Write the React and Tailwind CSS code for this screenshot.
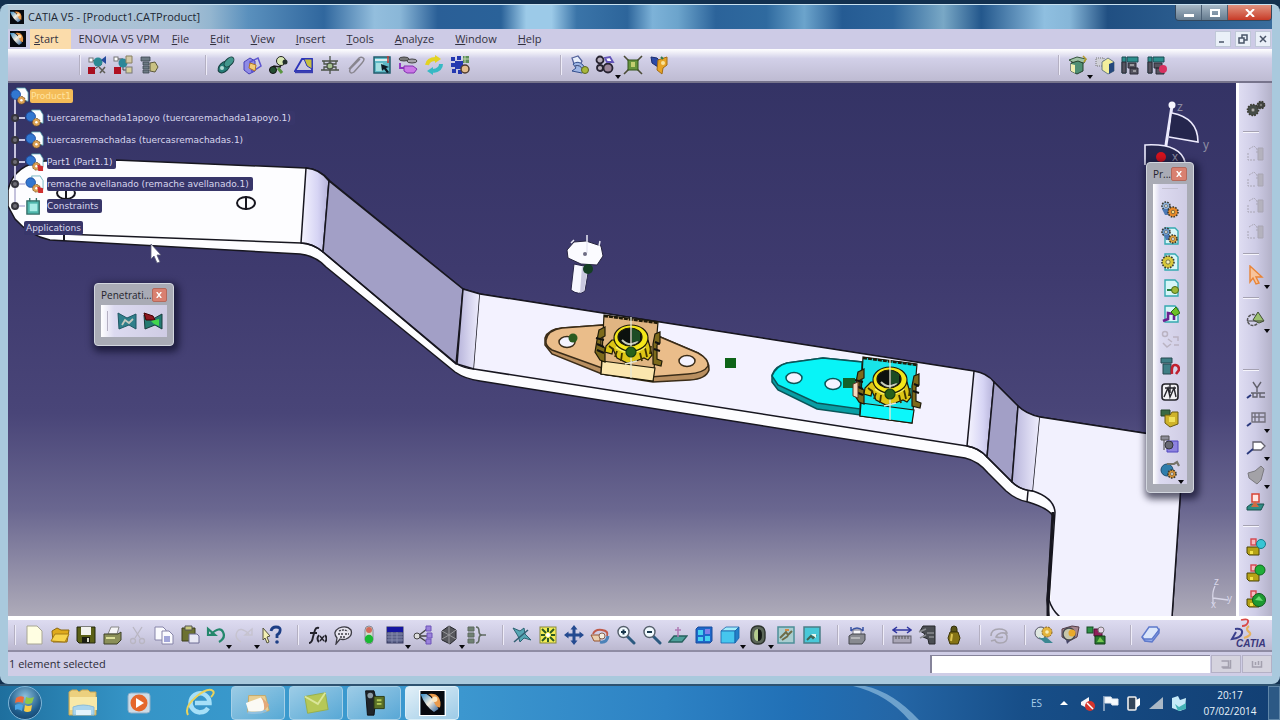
import React from "react";

const gear = (cx, cy, r, fill, hole = "#fff") => (
  <g>
    <circle cx={cx} cy={cy} r={r} fill={fill} stroke="#3b3b30" strokeWidth="1.6" strokeDasharray="1.6 1.2" />
    <circle cx={cx} cy={cy} r={r * 0.35} fill={hole} stroke="#3b3b30" strokeWidth="0.6" />
  </g>
);
const sheet = (
  <path d="M5 2h10l3 3v13H5z" fill="#d8f6f8" stroke="#35a9b0" strokeWidth="1.4" />
);
const disabledSheet = (
  <g stroke="#a9a6b4" fill="none" strokeDasharray="2 1">
    <path d="M3 6l5-3 3 3v4M2 10v7h8" />
    <path d="M12 5h5v12h-5z" fill="#b4b2be" strokeDasharray="none" />
  </g>
);
const magnifier = (
  <g>
    <path d="M11 11l7 7" stroke="#2c5a80" strokeWidth="3" strokeLinecap="round" />
    <circle cx="7.500" cy="7" r="5.500" fill="#f2fbff" stroke="#56606c" strokeWidth="1.400" />
  </g>
);
const stackBase = (
  <g>
    <path d="M1 10h12v8H3l-2-2z" fill="#b6a316" stroke="#4a4408" />
    <path d="M4 14h3v3H4z" fill="#f3e34a" />
    <rect x="5" y="2" width="5" height="6" fill="#f6b9c0" stroke="#d4464e" strokeWidth="1.400" />
  </g>
);

const art = {
  tplRed: (<g><path d="M5 5l10 4-9 6" stroke="#444" fill="none" /><rect x="2" y="3" width="4" height="4" fill="#fff" stroke="#777" /><circle cx="11" cy="7" r="4.500" fill="#2a8a94" /><path d="M14 5l5-4v8z" fill="#244a9c" /><rect x="1" y="12" width="7" height="7" fill="#a80f20" /><path d="M12 12l6 6M18 12l-5 6" stroke="#5d5c55" strokeWidth="1.500" /></g>),
  tplRed2: (<g><path d="M3 4h7v11h7" stroke="#444" fill="none" /><rect x="1" y="2" width="4" height="4" fill="#fff" stroke="#777" /><circle cx="10" cy="8" r="4.500" fill="#2b8798" /><path d="M13 1h6v7h-6z" fill="#d2c8a6" stroke="#888060" /><rect x="1" y="12" width="7" height="7" fill="#b01022" /><rect x="13" y="12" width="6" height="6" fill="#d5cf9c" stroke="#777" /></g>),
  tree: (<g><path d="M2 2h9v4H2zM4 7h6v3H4zM4 11h6v3H4zM4 15h6v3H4z" fill="#6d7a84" stroke="#3c4650" strokeWidth=".8" /><path d="M11 8l5-1 3 5-3 5-5-1z" fill="#c9c184" stroke="#5d5a3c" /></g>),
  coincide: (<g><ellipse cx="8" cy="12" rx="7" ry="4.500" transform="rotate(-45 8 12)" fill="#267d78" stroke="#173f3f" /><ellipse cx="13" cy="7" rx="6" ry="3.500" transform="rotate(-45 13 7)" fill="#42968c" stroke="#173f3f" /><circle cx="6" cy="13" r="2" fill="#b4dcd6" /></g>),
  contact: (<g><path d="M2 7l6-4 5 3v10l-6 3-5-4z" fill="#8f8be6" stroke="#4640b8" /><path d="M8 7l8-4 3 8-9 6z" fill="none" stroke="#5d55cf" strokeWidth="1.500" /><path d="M8 8l6 2-1 6-6-3z" fill="#f4cd76" stroke="#b27422" /></g>),
  offset: (<g><path d="M2 15l4-4 6 1 2-6" stroke="#222" strokeWidth="1.600" fill="none" /><circle cx="5" cy="15" r="3.500" fill="#244d31" stroke="#111" /><circle cx="13" cy="6" r="4.500" fill="#d7e6b2" stroke="#222" /><circle cx="17" cy="7" r="2.500" fill="#22302b" /><path d="M10 13l4 5" stroke="#5a9440" strokeWidth="3" /></g>),
  angle: (<g><path d="M1 16L8 4h10v12z" fill="none" stroke="#2c34b8" strokeWidth="1.800" /><path d="M10 4h8v10l-5-3z" fill="#c7c03e" stroke="#2c34b8" /><path d="M1 17h18" stroke="#3a3fb0" strokeWidth="2.400" /></g>),
  fix: (<g stroke="#4b5347" fill="none" strokeWidth="1.300"><path d="M10 1v18M2 6h16M4 6v3h12V6M1 15h18M4 12h12v3H4z" /><circle cx="10" cy="11" r="3" fill="#a6c292" /></g>),
  clip: (<path d="M3 14L13 3q3-2 5 1 0 2-2 4L8 17q-3 2-4 0-1-2 1-4l9-9" fill="none" stroke="#88858e" strokeWidth="1.500" />),
  quick: (<g><rect x="2" y="2" width="16" height="16" fill="#5fb9c6" stroke="#225d6e" strokeWidth="1.500" /><path d="M3 5h14" stroke="#d8eef0" strokeWidth="2" /><rect x="4" y="8" width="7" height="8" fill="#a6dfe2" /><path d="M9 9l8 3-3 1 3 4-2 1-3-4-2 2z" fill="#0c1a24" /><path d="M16 1v7" stroke="#c33a34" strokeWidth="1.500" /></g>),
  flexible: (<g><ellipse cx="6" cy="4" rx="5" ry="2" fill="#777" stroke="#444" /><ellipse cx="14" cy="6" rx="5" ry="2" fill="#a5a3aa" stroke="#444" /><path d="M2 8v5h4" stroke="#8c2fc0" fill="none" strokeWidth="1.800" /><path d="M6 11h9l4 3-3 4H9l-3-2z" fill="#ca77e6" stroke="#8330b0" /></g>),
  cycle: (<g fill="none" strokeWidth="4"><path d="M3 10q1-6 9-6" stroke="#e3d322" /><path d="M17 9q0 6-8 7" stroke="#36b9c4" /><path d="M11 0l6 4-6 4z" fill="#e3d322" stroke="none" /><path d="M9 12l-6 4 6 4z" fill="#36b9c4" stroke="none" /></g>),
  reuse: (<g fill="#2438b0"><path d="M1 2h4v4H1zM7 1h4v4H7zM1 8h4v4H1zM5 6h8v8H5zM2 14h4v4H2zM8 15h4v4H8z" /><path d="M13 1h6v7h-6z" fill="#5d8f5b" /><path d="M15 1v7M13 4h6" stroke="#c6d9b0" /><circle cx="15" cy="14" r="4" fill="#e3bd8e" stroke="#4d3b30" strokeWidth="1.500" /></g>),
  move: (<g><path d="M3 3l6-2 4 5-2 4-6-1z" fill="#e8eefb" stroke="#54639c" strokeWidth="1.300" /><path d="M4 9q5-4 10 1l3 5-4 3-10-2 4-3z" fill="#9db5e4" stroke="#34508e" /><path d="M6 11q5-2 8 4" stroke="#34406a" fill="none" /><circle cx="16" cy="15" r="3.500" fill="#a9b83a" stroke="#5c6620" /></g>),
  snap: (<g fill="#b7aebb" stroke="#272330" strokeWidth="1.800"><circle cx="5" cy="5" r="3.500" /><circle cx="5" cy="13" r="3" /><circle cx="13" cy="13" r="4.500" fill="#9a8699" /><path d="M10 3l5-1 3 5h-6z" fill="#fff" stroke="#6354b8" /></g>),
  explode: (<g><path d="M1 1l5 5M19 1l-5 5M1 19l5-5M19 19l-5-5" stroke="#4b4b36" strokeWidth="1.600" /><rect x="5" y="5" width="10" height="10" fill="#67943c" stroke="#35561c" /><path d="M8 7h4v5H8z" fill="#c3cf70" /></g>),
  manip: (<g><path d="M2 2l6 1 4 4-3 5-6-4z" fill="#2d4aa6" stroke="#1b2b6e" /><path d="M9 5l9-3v8l-4 3-1 6-5-4z" fill="#e7a326" stroke="#a26c14" /><circle cx="14" cy="8" r="2" fill="#f8e39b" /><path d="M12 2l2 2" stroke="#2d7a4a" strokeWidth="2" /></g>),
  section: (<g><path d="M2 5l8-3 9 2-2 4H7z" fill="#9fc2a5" stroke="#35543c" /><path d="M4 8l7-2 5 2v8l-6 3-6-3z" fill="#4f8f74" stroke="#26402c" /><path d="M4 9l4 1v8l-4-2z" fill="#f1efb0" /><path d="M16 1l3 3-2 3" fill="none" stroke="#b59b2a" strokeWidth="1.500" /></g>),
  scene: (<g><path d="M1 3h8v8H1z" fill="#d0d0d8" stroke="#777" strokeDasharray="1 1" /><path d="M7 7l6-4 6 4v9l-6 3-6-4z" fill="#f3ee9c" stroke="#6a7d86" /><path d="M14 9l5-2v9l-5 3z" fill="#25487d" /></g>),
  catalog: (<g><path d="M1 2h4v16H1zM6 2h11v5H6z" fill="#2c8e8d" stroke="#1b4b52" /><path d="M1 7h4v11H1zM7 8h8v5H7zM9 13h8v6H9z" fill="#55545f" stroke="#2d2c38" /><path d="M9 10h4M12 16h3" stroke="#ddd" /></g>),
  catalogRed: (<g><path d="M1 2h4v16H1zM6 2h11v5H6z" fill="#2c8e8d" stroke="#1b4b52" /><path d="M1 7h4v11H1zM7 8h8v5H7zM9 13h8v6H9z" fill="#55545f" stroke="#2d2c38" /><circle cx="16" cy="14" r="4" fill="#d8315f" /></g>),
  gearsDark: (<g>{gear(7, 11, 5.5, "#454c48", "#aaa")}{gear(15, 6, 3.5, "#3f4340", "#aaa")}</g>),
  ghost: disabledSheet,
  cursor: (<path d="M4 1l12 11-6 0 3 6-3 1-3-6-3 4z" fill="#f7c39b" stroke="#e98436" strokeWidth="1.400" />),
  fly: (<g><circle cx="7" cy="11" r="5.500" fill="none" stroke="#555" strokeWidth="1.500" strokeDasharray="3 1" /><path d="M7 11l5-8 6 9-5 2z" fill="#9bc070" stroke="#3f4e33" /><path d="M1 12h16" stroke="#444" /></g>),
  weld: (<g><path d="M7 1l4 6 4-6M11 7v4M5 12h14M7 12v4h4v-4M14 12v4h5" stroke="#62616c" strokeWidth="1.400" fill="none" /><path d="M1 17l4-3" stroke="#29387c" strokeWidth="2" /></g>),
  note: (<g><path d="M6 4v9h13V4zM9 4v9M13 4v9M6 8h13" stroke="#74727e" strokeWidth="1.400" fill="none" /><path d="M1 17l4-3" stroke="#29387c" strokeWidth="2" /></g>),
  flag: (<g><path d="M7 5h8l4 4-4 4H7z" fill="#fff" stroke="#62606c" strokeWidth="1.300" /><path d="M1 17l6-5" stroke="#29387c" strokeWidth="1.800" /></g>),
  view3d: (<path d="M2 8l7-2 6-5 3 3-3 11-4 4-8-6z" fill="#a3a2a7" stroke="#7a797f" />),
  ann: (<g><rect x="6" y="1" width="7" height="8" fill="#ffe7e4" stroke="#d74434" strokeWidth="1.500" /><path d="M1 14l4-3h13l-3 6H1z" fill="#2f8c84" stroke="#1b534f" /><path d="M9 8l4 6H5z" fill="#cf6c44" /></g>),
  cubeCyan: (<g>{stackBase}<circle cx="15" cy="7" r="4.500" fill="#36c5d4" stroke="#187b8a" /></g>),
  cubeGreen: (<g>{stackBase}<circle cx="14" cy="7" r="5" fill="#1fae38" stroke="#0f6a1e" /></g>),
  cubeGreen2: (<g>{stackBase}<circle cx="13" cy="11" r="6.500" fill="#1d9a32" stroke="#0d5a1b" /><path d="M9 11l4-4 4 5z" fill="#6bdc72" /></g>),
  comp: (<g>{gear(6, 6, 4, "#8fb2dc")}<path d="M2 9h8v6H5z" fill="#4b77b4" />{gear(13, 12, 5, "#e98a2a", "#f9dc80")}</g>),
  prod: (<g>{sheet}{gear(6, 6, 4, "#6b99cf")}<path d="M4 9h6v5H6z" fill="#4b77b4" />{gear(13, 13, 4, "#e0a23c", "#fff")}</g>),
  part: (<g>{sheet}{gear(8, 10, 6, "#d8c83a", "#f7f2b8")}</g>),
  existing: (<g>{sheet}<path d="M7 12h8" stroke="#257c3c" strokeWidth="2" /><circle cx="15" cy="12" r="3.500" fill="#9fb837" stroke="#4b6a1b" /></g>),
  existing2: (<g>{sheet}<path d="M3 17l5-2V9l6 1v6" stroke="#6c2090" strokeWidth="2.600" fill="none" /><path d="M11 8l5-5 4 6-5 3z" fill="#6bc026" stroke="#2f6a14" /></g>),
  replace: (<g stroke="#bab3c2" strokeWidth="1.500" fill="none"><circle cx="5" cy="4" r="2.500" /><path d="M8 9l4 3M13 7h5v4M3 13l4 4 4-3M14 15h5" /></g>),
  reorder: (<g><path d="M1 2h11v5H1zM3 8h8v10H3z" fill="#3f7f86" stroke="#26484f" /><path d="M12 18q-1-9 3-9t4 5l-3 4" fill="none" stroke="#c1202f" strokeWidth="2.600" /></g>),
  number: (<g><rect x="2" y="2" width="16" height="16" rx="3" fill="#f2f1f5" stroke="#25242b" strokeWidth="1.600" /><path d="M4 15L8 6l2 9 4-9 2 9M5 6h11M10 2v9" stroke="#25242b" strokeWidth="1.400" fill="none" /></g>),
  load: (<g><path d="M1 2h9v6H1z" fill="#386a44" stroke="#23422b" /><path d="M5 7h5l2-3h6v12l-8 3-5-4z" fill="#cfb32a" stroke="#6a5a11" /><path d="M9 9h6v5H9z" fill="#f0e05a" /></g>),
  multi: (<g><path d="M1 2h8v4H1z" fill="#8c8c98" stroke="#555" /><path d="M7 7h11v11H7z" fill="#8e83e0" stroke="#5146bf" /><circle cx="9" cy="11" r="4" fill="#676873" stroke="#33333c" /><path d="M4 6v10" stroke="#444" /></g>),
  fast: (<g><circle cx="7" cy="10" r="6" fill="#2f7dab" stroke="#1d4d70" />{gear(12, 14, 4, "#d49135")}<path d="M7 4h7l3-2 2 4" stroke="#77746a" strokeWidth="2.200" fill="none" /></g>),
  fileNew: (<path d="M3 1h10l5 5v13H3z" fill="#fffee2" stroke="#a8a694" />),
  folder: (<g><path d="M2 6l5-3 4 2h8l-2 12H3z" fill="#dfaa1b" stroke="#8b6912" /><path d="M1 16L5 9h14l-4 8z" fill="#f7d44c" stroke="#a67d16" /></g>),
  save: (<g><path d="M1 2h18v16H3l-2-2z" fill="#5b6017" stroke="#23270c" /><rect x="5" y="2" width="10" height="8" fill="#f2f3ee" /><rect x="6" y="12" width="8" height="6" fill="#1b1d12" /><rect x="11" y="13" width="2" height="4" fill="#d8d8c8" /></g>),
  print: (<g><path d="M6 9L9 2h8l-2 7z" fill="#f4f4f6" stroke="#888" /><path d="M2 9h14l3-2v8l-4 4H2z" fill="#8a8f58" stroke="#3c4027" /><path d="M4 13h9" stroke="#dce09a" strokeWidth="2" /></g>),
  cut: (<g stroke="#b9b6c2" strokeWidth="1.300" fill="none"><path d="M5 2l7 11M14 2L7 13" /><circle cx="5" cy="16" r="2.500" /><circle cx="14" cy="16" r="2.500" /></g>),
  copy: (<g fill="#fafafe" stroke="#8684a8"><path d="M1 2h8l3 3v10H1z" /><path d="M8 6h7l4 4v9H8z" /><path d="M10 12h6M10 14h6M10 16h6" stroke="#4a52b4" /></g>),
  paste: (<g><path d="M2 3h13v13H2z" fill="#6c7130" stroke="#3a3c1c" /><path d="M5 1h7v4H5z" fill="#c9ca7e" stroke="#555" /><path d="M9 9h8l2 2v7H9z" fill="#e8e8f4" stroke="#6c6c94" /></g>),
  undo: (<path d="M5 9q9-8 12-2t-4 10M2 4v6h7z" fill="none" stroke="#23876c" strokeWidth="2.200" />),
  redo: (<path d="M15 9q-9-8-12-2t4 10M18 4v6h-7z" fill="none" stroke="#c6c3cf" strokeWidth="1.400" />),
  help: (<g><path d="M1 3l7 8-3 1 2 5-2 1-2-5-2 2z" fill="#f2efb4" stroke="#54533c" /><path d="M9 6q1-4 5-4 5 0 4 4 0 2-3 4v3" stroke="#1c3e86" strokeWidth="2.800" fill="none" /><circle cx="15" cy="17" r="1.800" fill="#1c3e86" /></g>),
  fx: (<g fill="none" stroke="#23222b" strokeWidth="1.900"><path d="M2 18q3 0 4-6l2-7q1-3 4-2M3 8h7M12 10q-3 4 0 7M18 10q3 4 0 7" /><path d="M13 11l4 5M17 11l-4 5" strokeWidth="1.400" /></g>),
  comment: (<g fill="none" stroke="#3c3b44" strokeWidth="1.300"><path d="M4 13Q-1 7 6 3q8-3 12 2 2 6-5 9-3 1-6 0l-4 5z" fill="#e7e5ef" /><path d="M6 6q4-2 9 0M5 9h5M12 9h4M7 12h5" strokeDasharray="2 1" /></g>),
  light: (<g><rect x="6" y="1" width="8" height="18" rx="4" fill="#cfdccb" stroke="#889" /><circle cx="10" cy="5" r="3" fill="#d26b5b" /><circle cx="10" cy="14" r="4.200" fill="#19b832" /></g>),
  table: (<g><rect x="2" y="2" width="16" height="16" fill="#5a6088" stroke="#33365c" /><path d="M2 2h16v5H2z" fill="#1515a0" /><path d="M2 9h16M2 12h16M2 15h16M7 7v11M12 7v11" stroke="#8d92b4" strokeWidth=".8" /></g>),
  graph: (<g fill="#9b82dc" stroke="#6d52b8"><path d="M5 11L14 4M5 11h10M5 11l9 6" stroke="#444" strokeWidth="1.500" /><circle cx="4" cy="11" r="3" fill="#ddd" stroke="#444" /><path d="M13 1h5v5h-5zM14 8h5v5h-5zM13 14h5v5h-5z" /></g>),
  mesh: (<g><path d="M10 1l7 4v9l-6 5-8-4V6z" fill="#56575c" stroke="#24252a" /><path d="M10 1v18M3 6l7 4 7-5M3 14l7-4 7 4" stroke="#98989c" fill="none" /></g>),
  brace: (<g fill="none" stroke="#5f6a60" strokeWidth="1.600"><path d="M1 2h6v4H1zM1 8h6v4H1zM1 14h6v4H1z" fill="#6f8072" strokeWidth="1" /><path d="M9 2q3 0 3 4t3 4q-3 0-3 4t-3 4M15 10h4" /></g>),
  flyBlue: (<g><path d="M1 3l7 3 4-3 1 6 6 6-7-2-4 4-2-6z" fill="#55a6b4" stroke="#2b6373" /><path d="M2 17L16 5" stroke="#315f72" strokeWidth="1.600" /></g>),
  fit: (<g><rect x="2" y="2" width="16" height="16" fill="#f4ee56" stroke="#88893e" /><path d="M4 4l4 4M16 4l-4 4M4 16l4-4M16 16l-4-4M10 3v4M10 13v4M3 10h4M13 10h4" stroke="#2b5a24" strokeWidth="2" /><circle cx="10" cy="10" r="2" fill="#fff" /></g>),
  pan: (<path d="M10 0l3.500 4.500H11.500v4h4V6.500L20 10l-4.500 3.500v-2h-4v4h2L10 20l-3.500-4.500h2v-4h-4v2L0 10l4.500-3.500v2h4v-4h-2z" fill="#244a90" />),
  rotate: (<g fill="none"><path d="M3 9q2-5 9-4t5 6" stroke="#c05a48" strokeWidth="2" /><path d="M1 10h9v6H4z" fill="#e9cfae" stroke="#95522f" /><path d="M10 17q7 1 8-6" stroke="#4c82b8" strokeWidth="3" /><circle cx="12" cy="11" r="3" fill="#f4eee0" stroke="#87614d" /></g>),
  zoomIn: (<g>{magnifier}<path d="M5 7h5M7.500 4.500v5" stroke="#18364b" strokeWidth="2" /></g>),
  zoomOut: (<g>{magnifier}<path d="M5 7h5" stroke="#18364b" strokeWidth="2" /></g>),
  normal: (<g><path d="M1 17l5-6h13l-5 6z" fill="#4b9f99" stroke="#28615f" strokeWidth="1.300" /><path d="M10 12V2M7 5h6" stroke="#b07ab4" strokeWidth="1.500" fill="none" /></g>),
  quad: (<g><path d="M2 4l2-2h14v14l-2 2H2z" fill="#1d67ca" stroke="#1b4d9c" /><path d="M4 5h5v5H4zM11 4h5v5h-5zM4 12h5v4H4zM11 11h5v5h-5z" fill="#46d0ef" /><path d="M11 4h5v5h-5z" fill="#8080e8" /></g>),
  cube: (<g stroke="#1763ac" strokeWidth=".8"><path d="M1 6l5-4h13l-4 4z" fill="#a3ecfa" /><path d="M1 6h14v12H1z" fill="#46c6ee" /><path d="M15 6l4-4v11l-4 5z" fill="#237fc8" /></g>),
  shade: (<g><rect x="3" y="1" width="14" height="18" rx="6" fill="#5b6658" stroke="#2d332d" strokeWidth="1.400" /><path d="M10 4q-4 0-4 6t4 6z" fill="#b5cc8e" /><path d="M10 4q4 0 4 6t-4 6z" fill="#121714" /></g>),
  hide: (<g><rect x="2" y="2" width="16" height="16" fill="#a9cdd0" stroke="#4c8f98" strokeWidth="1.500" /><path d="M4 13l6-6 2 3 4-4M6 15l6-4" stroke="#6d6c48" strokeWidth="2" fill="none" /><path d="M9 5h4" stroke="#d38a44" strokeWidth="2" /></g>),
  swap: (<g><rect x="2" y="2" width="16" height="16" fill="#48c8d8" stroke="#4b7d86" strokeWidth="1.500" /><path d="M5 15l4-4 2 2 3-3" stroke="#416454" strokeWidth="2" fill="none" /><path d="M9 9h5v4z" fill="#eaf8ee" /></g>),
  tools: (<g><path d="M4 6q6-6 12 0M4 6V2M16 6V2" stroke="#3853a4" fill="none" strokeWidth="1.500" /><path d="M6 5h8v5H6z" fill="#f6f6fa" stroke="#778" /><path d="M2 11l3-2h13v6l-3 4H2z" fill="#888a90" stroke="#44464c" /><path d="M4 13h9" stroke="#e0e0e0" /></g>),
  measure: (<g><path d="M2 5h16M5 2L1 5l4 3M15 2l4 3-4 3" stroke="#3036a0" strokeWidth="1.500" fill="none" /><rect x="1" y="11" width="18" height="7" fill="#a9a6b6" stroke="#62606e" /><path d="M4 11v3M7 11v3M10 11v3M13 11v3M16 11v3" stroke="#555" /></g>),
  item: (<g><path d="M5 1h12v18h-6l-1-5-5-2 2-3-5-3z" fill="#4a4d52" stroke="#26282c" /><path d="M1 7l7-3M2 13l6-3M9 8h7M11 12h5" stroke="#898b90" strokeWidth="1.600" /></g>),
  weight: (<g><path d="M7 4q0-3 3-3t3 3v3H7z" fill="#595317" stroke="#33300c" /><path d="M6 7h8l2 6-2 6H6l-2-6z" fill="#857315" stroke="#40380a" /><path d="M8 9l-1 7" stroke="#dcc451" strokeWidth="2" /></g>),
  knot: (<path d="M2 11q0-7 8-7 7 0 8 4l-5 0M2 16l4-1q1 3 5 3 8 0 7-7-1-4-6-3-4 1-5 4 4 1 7 0" fill="none" stroke="#a8a5b0" strokeWidth="1.600" />),
  render: (<g><circle cx="7" cy="8" r="6" fill="#dfe7e0" stroke="#556" /><path d="M2 10q4 5 10 2l7 6h-8z" fill="#3b8792" /><circle cx="13" cy="7" r="5" fill="#e4b43c" stroke="#886422" strokeDasharray="2 1" /><circle cx="13" cy="7" r="1.800" fill="#f7efb8" /></g>),
  render2: (<g><path d="M2 4l10-3 7 1-2 10-8 4-7-4z" fill="#a5868e" stroke="#553e4a" /><circle cx="9" cy="9" r="6" fill="#c7c6ab" stroke="#43484f" strokeWidth="1.400" /><circle cx="12" cy="8" r="3.500" fill="#e9a92b" /><path d="M6 15l1 4 3-3" fill="#446" /></g>),
  material: (<g><rect x="1" y="2" width="6" height="6" fill="#2e9046" stroke="#164b25" /><path d="M8 4h8v7H8z" fill="#8f1f5a" stroke="#541135" /><circle cx="15" cy="5" r="3" fill="#e6d4e8" stroke="#777" /><path d="M9 11h10v8H9z" fill="#2a7a30" stroke="#123e17" /><path d="M11 17l3-5 4 5z" fill="#76c850" /></g>),
  eraser: (<g fill="#dbe6fa" stroke="#5e79cb" strokeWidth="1.400"><path d="M2 12L9 2h8l2 3-7 11H5z" /><path d="M2 12l3 4 7 1 7-9V5l-7 9H4z" fill="#96aeec" /></g>),
  penA: (<g><path d="M1 2l9 5 9-4v15l-7-4-10 4z" fill="#2f7f8b" stroke="#205764" /><path d="M5 14l3-5 4 3 4-4" stroke="#c4c8be" strokeWidth="1.800" fill="none" /></g>),
  penB: (<g><path d="M1 4l9 4 9-5v15l-7-4-10 4z" fill="#247a72" stroke="#183c3c" /><path d="M1 2l9 3 2 4H3z" fill="#8f1720" stroke="#400" /><path d="M8 10l8-2v7l-5-2z" fill="#43d64e" /></g>),
};

function Tool({ name, menu, tall }) {
  return (
    <button
      type="button"
      aria-label={name}
      className={
        menu && !tall
          ? "relative flex h-5 w-[22px] shrink-0 items-center"
          : "relative flex h-5 w-5 shrink-0 items-center"
      }
    >
      <svg viewBox="0 0 20 20" className="h-5 w-5" aria-hidden="true">
        {art[name]}
      </svg>
      {menu && (
        <svg viewBox="0 0 6 4" className="absolute -right-1 -bottom-1 h-1 w-1.5" aria-hidden="true">
          <path d="M0 0h6L3 4z" fill="#08080c" />
        </svg>
      )}
    </button>
  );
}

const Grip = ({ className = "" }) => (
  <span className={"h-5 w-px shrink-0 bg-[#b4b0c2] shadow-[1px_0_0_#eeecf8] " + className} />
);

function Group({ items, className = "" }) {
  return (
    <div className={"flex shrink-0 items-center gap-1.5 " + className}>
      {items.map((i) => (
        <Tool key={i} name={i.replace("*", "")} menu={i.endsWith("*")} />
      ))}
    </div>
  );
}

function RailGroup({ items, className = "gap-1.5" }) {
  return (
    <div className={"flex flex-col items-center " + className}>
      {items.map((i, n) => (
        <Tool key={i + n} name={i.replace("*", "")} menu={i.endsWith("*")} tall />
      ))}
    </div>
  );
}

const RailGrip = () => (
  <div className="flex h-6 w-full items-center">
    <span className="ml-1 h-px w-4 bg-[#a5a2b2] shadow-[0_1px_0_#f6f5fc]" />
  </div>
);

const AppIcon = ({ className }) => (
  <svg viewBox="0 0 16 16" className={className} aria-hidden="true">
    <defs>
      <linearGradient id="comet" x1="0" y1="0" x2="1" y2="1">
        <stop offset="0" stopColor="#2f86c4" />
        <stop offset="0.500" stopColor="#f6efe0" />
        <stop offset="1" stopColor="#2a5f9a" />
      </linearGradient>
    </defs>
    <rect width="16" height="16" fill="#07090f" />
    <path d="M0 2q3 8 9 12l3-2Q9 5 4 2z" fill="url(#comet)" />
    <path d="M5 2q5-1 7 2t1 7q-3 0-4-4T5 2z" fill="#e99a4c" />
    <circle cx="9.500" cy="5.500" r="1.800" fill="#fbe6c0" />
  </svg>
);

function TitleBar() {
  return (
    <header className="flex h-6 items-center bg-[linear-gradient(90deg,#b5c9d9_0%,#a6bfd4_14%,#94b6d0_16%,#5a90bd_19%,#30679e_25%,#93bedd_29%,#8ab7d8_31%,#2a5f97_34%,#2a6299_39%,#9ccae8_41%,#9ccae8_43%,#3a74a8_45%,#2d659b_49%,#7db2d8_51%,#6ca4cc_53%,#2b639a_56%,#2f6a9f_60%,#6ca4cc_63%,#255b93_66%,#2d659b_70%,#79a8c6_74%,#23578c_77%,#8fbfe0_82%,#86b6d8_84%,#204f82_87%,#386c9c_100%)] pl-0.5">
      <AppIcon className="h-3.5 w-3.5" />
      <h1 className="pl-1 font-['Open_Sans','Noto_Sans',sans-serif] text-[11px] leading-4 text-[#1c2733]">
        CATIA V5 - [Product1.CATProduct]
      </h1>
      <div className="ml-auto flex h-4 self-start overflow-hidden rounded-b border border-t-0 border-[#33475c] text-white">
        <button type="button" aria-label="Minimize" className="flex h-4 w-[26px] items-center justify-center border-r border-[#4b5f74] bg-linear-to-b from-[#a7b8c6] to-[#62788c]">
          <span className="mt-1 h-[3px] w-2.5 bg-white" />
        </button>
        <button type="button" aria-label="Restore" className="flex h-4 w-[26px] items-center justify-center border-r border-[#4b5f74] bg-linear-to-b from-[#a7b8c6] to-[#62788c]">
          <span className="h-2 w-2.5 border-2 border-white" />
        </button>
        <button type="button" aria-label="Close" className="flex h-4 w-[43px] items-center justify-center bg-linear-to-b from-[#e0917f] to-[#c5301d]">
          <svg viewBox="0 0 10 8" className="h-2 w-2.5"><path d="M1 0l8 8M9 0L1 8" stroke="#fff" strokeWidth="2" /></svg>
        </button>
      </div>
    </header>
  );
}

const menus = ["File", "Edit", "View", "Insert", "Tools", "Analyze", "Window", "Help"];

function MenuBar() {
  return (
    <nav className="flex h-5 items-center bg-[#cdcbe6] font-['Open_Sans','Noto_Sans',sans-serif] text-[11px] leading-4 text-[#33313f]">
      <AppIcon className="ml-0.5 h-4 w-4" />
      <button type="button" className="ml-1 h-full bg-[#fbdcab] pr-3 pl-1"><u>S</u>tart</button>
      <button type="button" className="ml-2">ENOVIA V5 VPM</button>
      <div className="ml-3 flex gap-[21px]">
        {menus.map((m) => (
          <button type="button" key={m}><u>{m[0]}</u>{m.slice(1)}</button>
        ))}
      </div>
      <div className="ml-auto flex gap-1 pr-px">
        {["M2 9h5", "M2 5h5v5H2zM5 5V2h5v5H7", "M3 3l6 6M9 3l-6 6"].map((d, i) => (
          <button type="button" key={d} aria-label={["Minimize document", "Restore document", "Close document"][i]} className="flex h-4 w-4 items-center justify-center border border-[#c0c8d8] bg-[#eaf0f8]">
            <svg viewBox="0 0 12 12" className="h-3 w-3"><path d={d} fill="none" stroke="#4a5568" strokeWidth="1.500" /></svg>
          </button>
        ))}
      </div>
    </nav>
  );
}

function TopTools() {
  return (
    <div className="flex h-[34px] items-center border-b-2 border-[#77748c] bg-linear-to-b from-white via-[#d2d0e8] via-30% to-[#bebbd2]">
      <Grip className="ml-[71px]" />
      <Group className="ml-[7px]" items={["tplRed", "tplRed2", "tree"]} />
      <Grip className="ml-[46px]" />
      <Group className="ml-2.5" items={["coincide", "contact", "offset", "angle", "fix", "clip", "quick", "flexible", "cycle", "reuse"]} />
      <Grip className="ml-[90px]" />
      <Group className="ml-2" items={["move", "snap*", "explode", "manip"]} />
      <Grip className="ml-auto" />
      <Group className="mr-[105px] ml-2" items={["section*", "scene", "catalog", "catalogRed"]} />
    </div>
  );
}

const bottomGroups = [
  ["fileNew", "folder", "save", "print", "cut", "copy", "paste", "undo*", "redo*", "help"],
  ["fx", "comment", "light", "table*", "graph", "mesh*", "brace"],
  ["flyBlue", "fit", "pan", "rotate", "zoomIn", "zoomOut", "normal", "quad", "cube*", "shade*", "hide", "swap"],
  ["tools"],
  ["measure", "item", "weight"],
  ["knot"],
  ["render", "render2", "material"],
];

const ToolStrip = ({ items }) => (
  <div className="flex items-center gap-[9px]">
    <Grip />
    <Group items={items} />
  </div>
);

function BottomTools() {
  return (
    <div className="flex h-9 items-center border-t-4 border-b-2 border-t-white border-b-[#8f8ca4] bg-linear-to-b from-[#dddbf0] via-[#cecce4] to-[#bcb9d0]">
      <div className="flex items-center gap-[15px] pl-1.5">
        {bottomGroups.map((g) => (
          <ToolStrip key={g[0]} items={g} />
        ))}
      </div>
      <div className="pl-6">
        <ToolStrip items={["eraser"]} />
      </div>
      <svg viewBox="0 0 40 30" className="-mt-1 mr-0.5 ml-auto h-[30px] w-10" role="img" aria-label="CATIA">
        <path d="M11 2q8-2 7 2t-6 4" fill="none" stroke="#d94a48" strokeWidth="1.800" />
        <path d="M5 11q8-1 7 4t-10 6l4-7" fill="none" stroke="#3a3f8c" strokeWidth="2" />
        <path d="M19 8q-4 3 0 6t-5 6" fill="none" stroke="#e6b260" strokeWidth="2.200" />
        <text x="6" y="29" fontFamily="Liberation Sans, sans-serif" fontSize="10" fontStyle="italic" fontWeight="700" fill="#39377c">CATIA</text>
      </svg>
    </div>
  );
}

function StatusBar() {
  return (
    <footer className="flex h-6 items-center bg-[#cfcde6] font-['Open_Sans','Noto_Sans',sans-serif] text-[11px] text-[#2c2b36]">
      <p className="pl-px leading-4">1 element selected</p>
      <input aria-label="Power input" className="ml-auto h-[18px] w-[280px] border-t border-l-2 border-[#85839a] bg-white px-1 outline-none" />
      {["M3 3h7v6H3M12 2v8H4", "M3 3v6h9V3M6 4v3M9 3v4"].map((d, i) => (
        <button type="button" key={d} aria-label={["Command list", "Dialog"][i]} className="ml-px flex h-[18px] w-[30px] items-center justify-center border border-[#b4b1c6] bg-[#d5d3de]">
          <svg viewBox="0 0 15 12" className="h-3 w-4"><path d={d} fill="none" stroke="#a3a0ae" strokeWidth="1.500" /></svg>
        </button>
      ))}
    </footer>
  );
}

const ProductIcon = ({ red }) => (
  <svg viewBox="0 0 20 20" className="relative h-[19px] w-[19px] shrink-0" aria-hidden="true">
    <path d="M7 1h9l3 5v9L9 12z" fill="#fbfdff" stroke="#55a7b4" strokeWidth=".8" />
    <circle cx="6" cy="8" r="5" fill="#3277d0" stroke="#1b4da0" />
    <circle cx="12" cy="14" r="4" fill="#dba254" stroke="#765226" strokeDasharray="2 1" />
    <circle cx="12" cy="14" r="1.300" fill="#fff" />
    {red && <path d="M13 12l6 2v5h-5z" fill="#cf3030" />}
  </svg>
);

const nodes = [
  ["tuercaremachada1apoyo (tuercaremachada1apoyo.1)", "p"],
  ["tuercasremachadas (tuercasremachadas.1)", "p"],
  ["Part1 (Part1.1)", "r"],
  ["remache avellanado (remache avellanado.1)", "r"],
  ["Constraints", "c"],
];

function SpecTree() {
  return (
    <ul className="relative flex w-fit flex-col pt-0.5 font-['DejaVu_Sans',sans-serif] text-[9px] leading-[14px] text-[#d9d7ee]">
      <span className="absolute top-4 bottom-8 left-1.5 w-0.5 bg-[#c4c2dc]" aria-hidden="true" />
      <li className="flex h-[22px] items-center gap-px pl-0.5">
        <ProductIcon />
        <span className="rounded-[2px] bg-[#f4bc58] px-px pr-0.5 text-[#ffe3a0]">Product1</span>
      </li>
      {nodes.map(([label, kind]) => (
        <li key={label} className="relative flex h-[22px] items-center">
          <span className="ml-[3px] h-2 w-2 rounded-full border-2 border-[#35343c] bg-[#6c6b73]" />
          <span className="h-0.5 w-1.5 bg-[#c8c6e2]" />
          {kind === "c" ? (
            <svg viewBox="0 0 20 20" className="h-[19px] w-[19px]" aria-hidden="true">
              <path d="M2 4h13v14H2zM5 1v4M12 1v4" fill="#4fb6ac" stroke="#356e68" strokeWidth="1.400" />
              <path d="M5 7h8v8H5z" fill="#a9ece6" />
            </svg>
          ) : (
            <ProductIcon red={kind === "r"} />
          )}
          <span className="ml-[3px] rounded-[2px] bg-[#38366a] pr-1 whitespace-nowrap">{label}</span>
        </li>
      ))}
      <li className="flex h-[22px] items-center pl-4">
        <span className="rounded-[2px] bg-[#38366a] px-0.5">Applications</span>
      </li>
    </ul>
  );
}

function Clamp({ x, y, plate, lip }) {
  return (
    <g transform={`translate(${x} ${y})`} stroke="#1e1a08" strokeWidth="1.200">
      <path d="M-27-23L27-16 22 43-30 36z" fill={plate} />
      <path d="M-27-22L27-15" strokeWidth="2.400" strokeDasharray="4 1" />
      <path d="M-29 23L24 30 22 43-30 36z" fill={lip} />
      <path d="M-32-8l6-3v9l-4 2v8l4 2v14l-5-2-5-8 2-12z" fill="#7d6a1c" />
      <path d="M24-4l5-2v11l-3 2v14l5 2-1 5-8-2V6z" fill="#7d6a1c" />
      <path d="M-35 0l8 2M-34 6l7 3M-34 12l7 3M24 4l5 2M23 11l6 2" stroke="#111" strokeWidth="2" />
      <path d="M-19 2l-6 6-1 6 7 2 1-5 4 9 10 5 9-2 8-3 4 2 4-5-2-8-2-7z" fill="#ddc516" />
      <path d="M-22 8l5 4M-14 13l-2 6M-9 15l-1 8M9 15l2 8M14 10l2 9M20 8l-1 8" stroke="#3d3300" strokeWidth="1.800" />
      <path d="M-15 9q14 10 29 0" fill="none" stroke="#f7ef5c" strokeWidth="2.400" />
      <ellipse rx="17" ry="13" fill="#f4e61a" />
      <ellipse cx="-1" cy="-1" rx="12" ry="9" fill="#0c110e" />
      <path d="M-9 2q8 8 16 1" fill="none" stroke="#c6cbbb" strokeWidth="2" />
      <path d="M1-10l8 4v9l-8 1z" fill="#1c4b24" stroke="none" />
      <path d="M0-21v34M0 18v22M-6 26l12-3" stroke="#e6e8d4" strokeWidth="1.300" />
      <circle cx="0" cy="14" r="5" fill="#27601a" stroke="#143c10" />
    </g>
  );
}

function Model() {
  return (
    <svg viewBox="8 83 1228 533" preserveAspectRatio="xMidYMid slice" className="absolute inset-0 h-full w-full" role="img" aria-label="Assembly model">
      <defs>
        <linearGradient id="bend" x1="0" x2="1">
          <stop offset="0" stopColor="#f6f5ff" />
          <stop offset="0.600" stopColor="#d6d4f4" />
          <stop offset="1" stopColor="#b4b1d8" />
        </linearGradient>
        <linearGradient id="bendBack" x1="0" x2="1">
          <stop offset="0" stopColor="#b6b3da" />
          <stop offset="1" stopColor="#f0effe" />
        </linearGradient>
      </defs>
      <g stroke="#17161f" strokeWidth="1.500" strokeLinejoin="round">
        <path d="M115 160L306 168Q320 169 330 181L463 289 480 294 972 371Q985 373 994 382L1018 406Q1026 414 1040 417L1150 434 1184 440 1172 617H1049L1047 600 1053 516Q1048 508 1028 502 1016 500 1006 491L988 473Q978 461 965 458L480 381Q465 379 455 372L326 267Q316 256 300 254L50 240Q30 236 15 219L8 206V190Q14 164 45 161z" fill="#fdfdff" />
        <path d="M306 168Q320 169 329 181L323 252Q312 243 301 243z" fill="url(#bend)" />
        <path d="M329 181L463 289 456 364 323 252z" fill="#a29fc6" />
        <path d="M463 289L480 294 474 369 457 364z" fill="url(#bendBack)" />
        <path d="M480 294L974 371 967 446 474 369z" fill="#f3f2ff" stroke="none" />
        <path d="M974 371Q987 373 994 382L987 457Q979 448 967 446z" fill="url(#bend)" />
        <path d="M994 382L1018 406 1012 482 987 457z" fill="#a29fc6" />
        <path d="M1018 406Q1026 414 1040 417L1033 491Q1020 490 1012 482z" fill="url(#bendBack)" />
        <path d="M1040 417L1150 434 1184 440 1172 617H1050L1054 512Q1048 494 1033 491z" fill="#f2f1fe" stroke="none" />
        <path d="M62 234L301 243Q314 244 323 252L457 364Q463 368 474 369L967 446Q979 448 987 457L1012 482Q1020 490 1033 491 1054 498 1055 512L1049 600Q1052 610 1060 617M480 294L974 371M1040 417L1150 434M1184 440L1172 617M1028 491L1027 502" fill="none" />
        <path d="M1053 512L1048 600V617" strokeWidth="3" fill="none" />
        <g fill="none" strokeWidth="2">
          <ellipse cx="246" cy="203" rx="9" ry="6" />
          <path d="M246 196v14" />
          <ellipse cx="66" cy="193" rx="9" ry="6" />
          <path d="M66 186v14M64 234v7" />
        </g>
      </g>

      <g stroke="#3a2c18" strokeWidth="1.500">
        <path d="M545 345V338Q548 329 562 328L603 325 658 336 698 353Q710 360 709 370 706 379 690 380L653 382 602 374 552 354z" fill="#b98f60" />
        <path d="M546 340Q548 330 562 328L603 325 658 336 698 353Q709 359 708 366 704 373 688 374L650 377 602 368 552 350Q545 346 546 340z" fill="#eabd8a" />
        <ellipse cx="567" cy="342" rx="8" ry="5.500" fill="#f4f3ff" />
        <ellipse cx="687" cy="361" rx="8" ry="5.500" fill="#f4f3ff" />
      </g>
      <Clamp x={631} y={338} plate="#e0b582" lip="#fbe6ae" />
      <circle cx="573" cy="338" r="4.500" fill="#2b5b20" />
      <g stroke="#0a5558" strokeWidth="1.500">
        <path d="M772 382V375Q775 366 787 363L823 358 862 362 860 415 817 409 778 390z" fill="#089ea4" />
        <path d="M772 376Q776 366 787 363L823 358 862 362 860 409 817 403 778 385z" fill="#08f4f7" />
        <ellipse cx="794" cy="378" rx="8" ry="5.500" fill="#f4f3ff" />
        <ellipse cx="833" cy="384" rx="8" ry="5.500" fill="#f4f3ff" />
      </g>
      <Clamp x={890} y={380} plate="#18e4e8" lip="#0cf7fa" />
      <rect x="843" y="378" width="12" height="10" fill="#12632a" />
      <path d="M853 384l5-2v16l-5-2z" fill="#f5d9bd" stroke="#553322" />
      <rect x="725" y="358" width="11" height="10" fill="#0d6418" />

      <path d="M574 264L589 267 585 291Q579 296 571 290z" fill="#f7f7ff" stroke="#29274a" />
      <path d="M582 266L588 268 584 291 580 293z" fill="#c9c8df" />
      <path d="M567 250l7-8 12-1 15 5 2 10-6 9-16-1-13-6z" fill="#fbfbff" stroke="#26243e" strokeLinejoin="round" />
      <path d="M587 235V253M571 243l3-3M600 241l-1 5" stroke="#e8e8f4" strokeWidth="1.500" />
      <circle cx="585" cy="254" r="2" fill="#6d6c84" />
      <circle cx="588" cy="269" r="5" fill="#153f24" />

      <g fill="none" stroke="#eceafd" strokeWidth="1.600">
        <path d="M1172 106L1164 158" strokeWidth="3" />
        <path d="M1172 113Q1198 118 1198 142L1169 137M1145 165V145Q1180 143 1185 162" fill="#25264d" />
      </g>
      <circle cx="1172" cy="105" r="3.500" fill="#f7f6ff" />
      <circle cx="1161" cy="157" r="5" fill="#d5131d" />
      <g fontFamily="Liberation Sans, sans-serif" fontSize="12" fill="#8c8ba0">
        <text x="1177" y="111">z</text>
        <text x="1203" y="149">y</text>
        <text x="1172" y="161">x</text>
      </g>
      <g stroke="#d8d6e8" strokeWidth="1.300" fill="#d8d6e8">
        <path d="M1213 604V600Q1212 592 1215 586M1213 598L1228 600" fill="none" />
        <g stroke="none" fontFamily="Liberation Sans, sans-serif" fontSize="10">
          <text x="1214" y="585">z</text>
          <text x="1227" y="602">y</text>
          <text x="1211" y="608">x</text>
        </g>
      </g>
      <path d="M151 244v15l3-3 3 7 3-1-3-7h4z" fill="#fff" stroke="#5b5a78" strokeWidth=".8" />
    </svg>
  );
}

function Palette({ title, className, bodyClass, children }) {
  return (
    <section aria-label={title} className={"absolute flex flex-col rounded-sm border border-[#d2d6de] bg-[#a9abb5] px-1.5 pb-2 shadow-[2px_3px_7px_3px_rgba(10,10,35,0.65)] " + className}>
      <div className="flex h-[21px] items-center justify-between font-['Open_Sans','Noto_Sans',sans-serif] text-[10px] leading-4 text-[#24242c]">
        <span>{title}</span>
        <button type="button" aria-label={"Close " + title} className="flex h-3.5 w-4 items-center justify-center rounded-[2px] border border-[#b4695c] bg-[#d98070]">
          <svg viewBox="0 0 8 8" className="h-1.5 w-2"><path d="M1 0l6 8M7 0L1 8" stroke="#fff" strokeWidth="1.800" /></svg>
        </button>
      </div>
      <div className={"flex items-center bg-linear-to-r from-white via-[#dcdaf0] via-20% to-[#cfcce4] " + bodyClass}>{children}</div>
    </section>
  );
}

function Rail() {
  return (
    <aside className="flex w-9 shrink-0 flex-col items-center border-l-[3px] border-white bg-linear-to-r from-[#dfddf2] via-[#cecce6] to-[#b3b1c8] pt-4">
      <RailGroup items={["gearsDark"]} />
      <RailGrip />
      <RailGroup items={["ghost", "ghost", "ghost", "ghost"]} />
      <RailGrip />
      <RailGroup items={["cursor*"]} />
      <RailGrip />
      <RailGroup className="h-12" items={["fly*"]} />
      <RailGrip />
      <RailGroup className="gap-2" items={["weld", "note*", "flag*", "view3d*", "ann"]} />
      <RailGrip />
      <RailGroup items={["cubeCyan", "cubeGreen", "cubeGreen2"]} />
    </aside>
  );
}

const taskIcons = [
  <g key="a"><path d="M5 7h18l4 16-6 2H4z" fill="#e8cf94" stroke="#c4a868" /><path d="M2 15l16-6 6 8-4 7H5z" fill="#fbfaf4" /><path d="M18 8l9 9-6 7q2-8-3-16z" fill="#e4a878" /><path d="M4 25q12 2 20-2" stroke="#8fc0e0" strokeWidth="2.500" fill="none" /></g>,
  <g key="b"><path d="M3 8l22-4 3 18-22 4z" fill="#b6c857" stroke="#98ae48" /><path d="M3 8l14 8L25 4" fill="none" stroke="#dbe69a" strokeWidth="2" /></g>,
  <g key="c"><path d="M6 2h9l2 8-2 18H8z" fill="#20252a" stroke="#0c0e10" /><path d="M15 8h11v13H15z" fill="#5b7128" stroke="#2c3a12" /><circle cx="11" cy="7" r="3" fill="#8c9ba3" /><path d="M18 12h5M18 16h5" stroke="#b6cc5a" strokeWidth="2" /></g>,
];

function Taskbar() {
  return (
    <nav aria-label="Taskbar" className="flex h-9 shrink-0 items-center border-t-2 border-[#2d5270] bg-[linear-gradient(90deg,#1e6f9e_0%,#3594c6_10%,#3a9ace_22%,#3c97cf_36%,#2d82c4_52%,#2170b6_62%,#2466a6_70%,#174e88_80%,#123f73_100%)] font-['Open_Sans','Noto_Sans',sans-serif] text-[11px] text-white">
      <button type="button" aria-label="Start" className="ml-2 flex h-[34px] w-[34px] items-center justify-center rounded-full border border-[#7fb4d6] bg-[radial-gradient(circle_at_50%_30%,#8ec0dc,#1f5d8c_60%,#123a60)]">
        <svg viewBox="0 0 20 20" className="h-5 w-5">
          <path d="M1 5q4-3 8-1L8 10Q4 8 0 10z" fill="#ee6a3c" />
          <path d="M11 4q4 2 8 0l-2 6q-4 2-7 0z" fill="#8fc84a" />
          <path d="M0 12q4-2 8 0l-1 6q-4-3-7-1z" fill="#4aa5e6" />
          <path d="M10 12q3 2 7 0l-1 6q-4 2-7 0z" fill="#f8cc47" />
        </svg>
      </button>
      <button type="button" aria-label="Explorer" className="ml-[25px]">
        <svg viewBox="0 0 32 30" className="h-[30px] w-8">
          <path d="M2 4l3-2h5l2 2 3-2h6l2 2h6v23H2z" fill="#ecd07e" stroke="#c8a856" />
          <path d="M3 9h27v13H3z" fill="#f8e9a8" />
          <path d="M6 19q10-4 21 0v8H6z" fill="#a9d5ee" stroke="#8bbcd8" />
          <path d="M9 22h15v5H9z" fill="#e4f3fb" />
        </svg>
      </button>
      <button type="button" aria-label="Media Player" className="ml-7">
        <svg viewBox="0 0 24 24" className="h-6 w-6">
          <rect x="1" y="2" width="22" height="20" rx="3" fill="#cddbe6" stroke="#8eafc8" />
          <circle cx="12" cy="12" r="8.500" fill="#e5672c" />
          <path d="M9 7l8 5-8 5z" fill="#fff" />
        </svg>
      </button>
      <button type="button" aria-label="Internet Explorer" className="ml-[34px]">
        <svg viewBox="0 0 30 30" className="h-[30px] w-[30px]">
          <path d="M23 20a9.500 9.500 0 1 1 1.500-5H10" fill="none" stroke="#a6e0f8" strokeWidth="4.500" />
          <path d="M3 27Q-1 19 11 9T28 3q2 2-2 6" fill="none" stroke="#ead35c" strokeWidth="2" />
        </svg>
      </button>
      <div className="ml-4 flex gap-1">
        {taskIcons.map((ic, i) => (
          <button type="button" key={i} aria-label={["Mail", "Notes", "Recorder"][i]} className="flex h-[34px] w-[54px] items-center justify-center rounded-sm border border-[#a5d0e8] bg-linear-to-br from-white/50 to-white/15">
            <svg viewBox="0 0 30 30" className="h-7 w-7">{ic}</svg>
          </button>
        ))}
        <button type="button" aria-label="CATIA" className="flex h-[34px] w-[54px] items-center justify-center rounded-sm border border-[#d8eef8] bg-linear-to-br from-white/85 to-white/50">
          <AppIcon className="h-[26px] w-[27px] border border-white" />
        </button>
      </div>
      <svg viewBox="0 0 90 34" className="ml-auto h-[34px] w-[90px]" aria-hidden="true">
        <path d="M0 0Q34 8 56 34H66Q40 6 12 0z" fill="#b8def4" opacity=".5" />
      </svg>
      <span className="ml-[88px] text-[10px] leading-4 text-[#a9cdea]">ES</span>
      <div className="ml-[13px] flex items-center gap-[5px]">
        {[
          <path key="1" d="M5 11l4-4 4 4z" fill="#fff" />,
          <g key="2"><path d="M3 8l8-5v12l-8-4z" fill="#f4f4f8" /><circle cx="12" cy="12" r="5" fill="#d3352e" /><path d="M9 9l6 6" stroke="#fff" strokeWidth="1.500" /></g>,
          <path key="3" d="M3 2v15M4 3h6l1 2h6v6h-6l-1-2H4z" fill="#f6fafc" stroke="#e4ebf2" />,
          <g key="4"><rect x="4" y="3" width="8" height="13" rx="1" fill="#34465a" stroke="#eee" strokeWidth="1.600" /><path d="M12 6l4-2v7l-4 3z" fill="#fff" /></g>,
          <path key="5" d="M2 15L16 3v12z" fill="#aab8c6" />,
          <g key="6"><path d="M2 4l6-2 2 4 6-2-1 11-5 2-8-3z" fill="#c6eaf8" /><path d="M5 10l4 3 7-4v6l-8 2z" fill="#44b3b8" /></g>,
        ].map((ic, i) => (
          <svg key={i} viewBox="0 0 18 18" className="h-[18px] w-[18px]" aria-hidden="true">{ic}</svg>
        ))}
      </div>
      <time className="ml-3.5 flex w-14 shrink-0 flex-col items-center text-[10px] leading-4 text-[#eaf3fa]">
        <span>20:17</span>
        <span>07/02/2014</span>
      </time>
      <button type="button" aria-label="Show desktop" className="ml-2.5 h-[34px] w-3 border border-[#5f86a8] bg-[#2c5985]" />
    </nav>
  );
}

export default function App() {
  return (
    <div className="flex h-screen flex-col overflow-hidden bg-[#12304f] pt-1">
      <main className="flex min-h-0 flex-1 flex-col rounded-lg border-t border-[#c8e2f2] bg-[#a9c9dd] px-2 pb-2">
        <TitleBar />
        <MenuBar />
        <TopTools />
        <div className="flex min-h-0 flex-1">
          <div className="relative min-w-0 flex-1 overflow-hidden bg-[linear-gradient(180deg,#343365_0%,#3e3a6e_35%,#494578_62%,#6a6790_80%,#aeabb9_100%)]">
            <Model />
            <SpecTree />
            <Palette title="Penetrati..." className="top-[200px] left-[86px] w-20" bodyClass="h-8 gap-1.5 pr-2 pl-1.5">
              <Grip className="mr-[3px]" />
              <Tool name="penA" />
              <Tool name="penB" />
            </Palette>
            <Palette title="Pr..." className="top-[79px] right-[42px] w-12" bodyClass="flex-col gap-1.5 pt-1 pb-1">
              <span className="mb-[5px] h-px w-4 bg-[#c2bfd0]" />
              {["comp", "prod", "part", "existing", "existing2", "replace", "reorder", "number", "load", "multi"].map((n) => (
                <Tool key={n} name={n} />
              ))}
              <Tool name="fast" menu tall />
            </Palette>
          </div>
          <Rail />
        </div>
        <BottomTools />
        <StatusBar />
      </main>
      <Taskbar />
    </div>
  );
}
